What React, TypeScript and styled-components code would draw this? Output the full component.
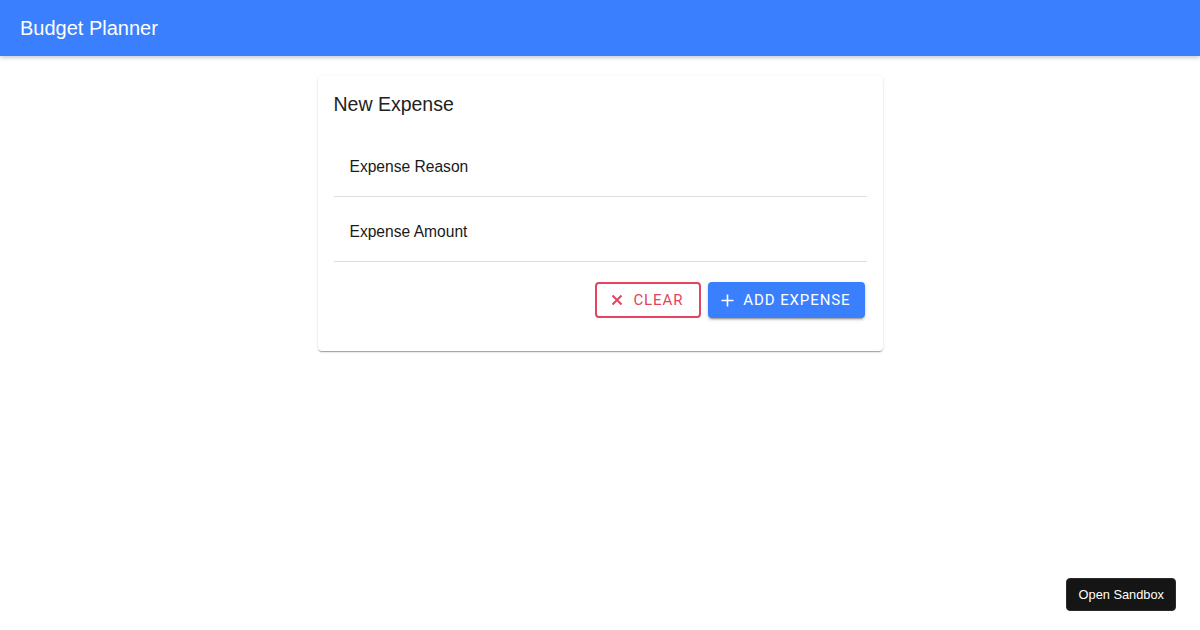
import React from 'react';
import styled, { createGlobalStyle } from 'styled-components';

const GlobalStyle = createGlobalStyle`
    body {
        margin: 0;
        background: #ffffff;
        font-family: "Liberation Sans", Arial, sans-serif;
    }
`;

const CloseIcon = () => (
    <svg width="12" height="12" viewBox="0 0 12 12">
        <path d="M1.5 1.5 L10.5 10.5 M10.5 1.5 L1.5 10.5" stroke="currentColor" strokeWidth="2" />
    </svg>
);

const PlusIcon = () => (
    <svg width="13" height="13" viewBox="0 0 13 13">
        <path d="M6.5 0.5 V12.5 M0.5 6.5 H12.5" stroke="currentColor" strokeWidth="1.6" />
    </svg>
);

const App = () => {
    return (
        <Page>
            <GlobalStyle />
            <Header>
                <AppTitle>Budget Planner</AppTitle>
            </Header>

            <Main>
                <Card>
                    <CardTitle>New Expense</CardTitle>
                    <Field>
                        <FieldLabel>Expense Reason</FieldLabel>
                    </Field>
                    <Field>
                        <FieldLabel>Expense Amount</FieldLabel>
                    </Field>
                    <Actions>
                        <Button variant="outline">
                            <CloseIcon />
                            Clear
                        </Button>
                        <Button variant="solid">
                            <PlusIcon />
                            Add Expense
                        </Button>
                    </Actions>
                </Card>
            </Main>

            <SandboxButton>Open Sandbox</SandboxButton>
        </Page>
    );
};

export default App;

const Page = styled.div`
    position: relative;
    min-height: 630px;
`;

const Header = styled.header`
    height: 56px;
    background-color: #3a80fe;
    display: flex;
    align-items: center;
    padding: 0 20px;
    box-shadow: 0 2px 4px rgba(0, 0, 0, 0.2);
`;

const AppTitle = styled.h1`
    margin: 0;
    color: #ffffff;
    font-size: 20px;
    font-weight: 400;
`;

const Main = styled.main`
    display: flex;
    justify-content: center;
    padding-top: 20px;
`;

const Card = styled.section`
    width: 565px;
    box-sizing: border-box;
    padding: 16px 16px 33px;
    background: #ffffff;
    border-radius: 4px;
    box-shadow: 0 2px 1px -1px rgba(0, 0, 0, 0.2), 0 1px 1px 0 rgba(0, 0, 0, 0.14),
        0 1px 3px 0 rgba(0, 0, 0, 0.12);
`;

const CardTitle = styled.h2`
    margin: 0 0 16px;
    font-size: 19.5px;
    line-height: 24px;
    font-weight: 400;
    color: #222222;
`;

const Field = styled.div`
    height: 65px;
    box-sizing: border-box;
    padding: 25px 0 0 16px;
    border-bottom: 1px solid #dddddd;
`;

const FieldLabel = styled.span`
    font-size: 15.6px;
    line-height: 19px;
    color: #1a1a1a;
`;

const Actions = styled.div`
    display: flex;
    justify-content: flex-end;
    gap: 7px;
    margin-top: 20px;
    padding-right: 2px;
`;

const Button = styled.button<{ variant: 'outline' | 'solid' }>`
    height: 36px;
    box-sizing: border-box;
    display: inline-flex;
    align-items: center;
    gap: ${(p) => (p.variant === 'outline' ? '10px' : '9px')};
    padding: ${(p) => (p.variant === 'outline' ? '0 16px 0 14px' : '0 12px 0 11px')};
    font-family: Roboto, "Liberation Sans", sans-serif;
    font-size: 15px;
    font-weight: 400;
    letter-spacing: 0.9px;
    text-transform: uppercase;
    border-radius: 4px;
    cursor: pointer;
    border: 2px solid ${(p) => (p.variant === 'outline' ? '#e4445f' : '#3a80fe')};
    background: ${(p) => (p.variant === 'outline' ? '#ffffff' : '#3a80fe')};
    color: ${(p) => (p.variant === 'outline' ? '#e4445f' : '#ffffff')};
    box-shadow: ${(p) =>
        p.variant === 'solid'
            ? '0 3px 1px -2px rgba(0,0,0,0.2), 0 2px 2px 0 rgba(0,0,0,0.14), 0 1px 5px 0 rgba(0,0,0,0.12)'
            : 'none'};
`;

const SandboxButton = styled.button`
    position: absolute;
    right: 24px;
    bottom: 19px;
    height: 33px;
    padding: 0 11px 0 12px;
    background: #151515;
    color: #ffffff;
    border: 1px solid #2a2a2a;
    border-radius: 4px;
    font-family: "Liberation Sans", Arial, sans-serif;
    font-size: 12.8px;
`;
